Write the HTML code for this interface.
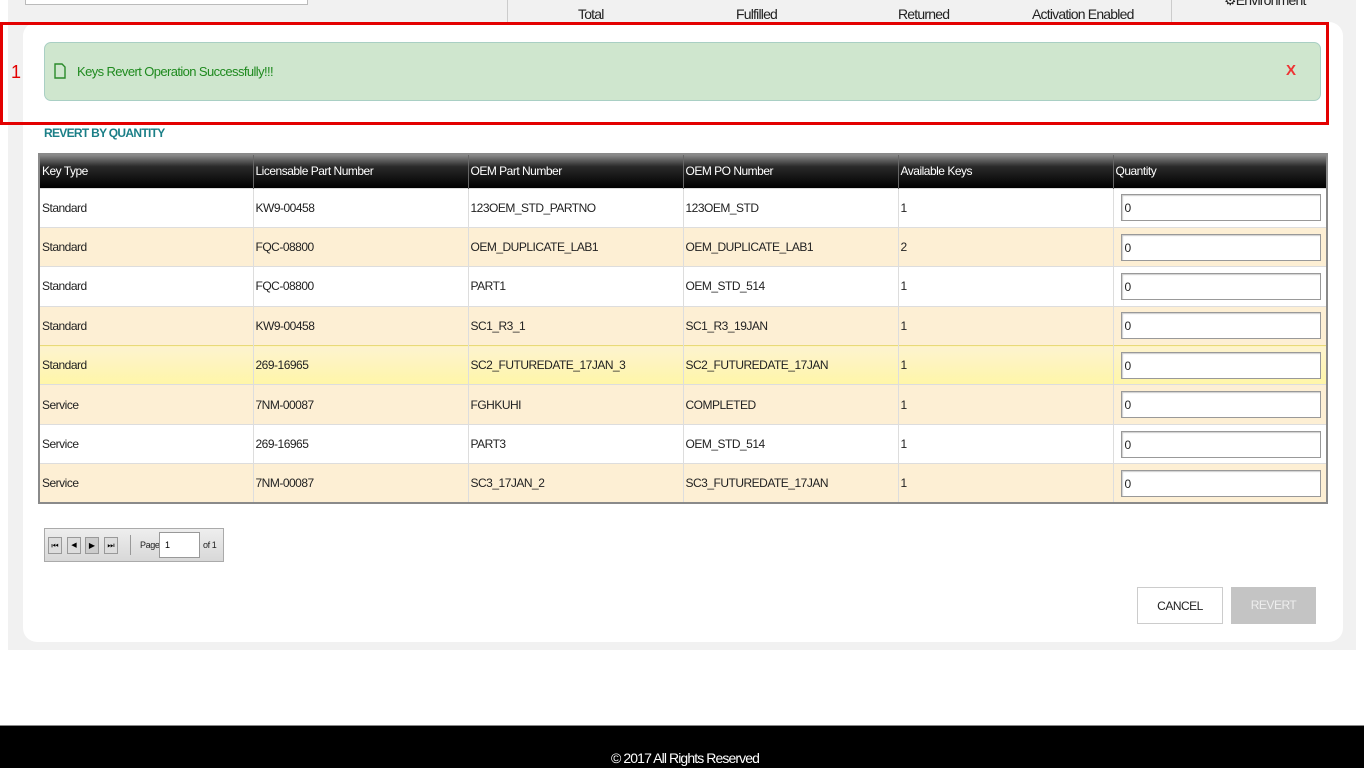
<!DOCTYPE html>
<html><head><meta charset="utf-8"><style>
*{margin:0;padding:0;box-sizing:border-box}
body{width:1364px;height:768px;position:relative;background:#fff;font-family:"Liberation Sans",sans-serif;overflow:hidden}
.a{position:absolute}
.t{font-size:12px;letter-spacing:-0.4px;color:#222;white-space:nowrap}
table{border-collapse:collapse;position:absolute;left:38px;top:153px;width:1290px;border:2px solid #8a8a8a;table-layout:fixed}
th{height:34px;background:linear-gradient(#8a8a8a,#2a2a2a 35%,#000);color:#fff;font-weight:normal;text-align:left;font-size:12px;letter-spacing:-0.5px;padding-left:2px;border-right:1px solid #666}
td{height:39.4px;font-size:12px;letter-spacing:-0.5px;color:#222;padding-left:2px;border:1px solid #ddd;border-width:1px 1px 0 0}
td.q{padding-left:7px}
tr.w td{background:#fff}
tr.n td{background:#fdefd4}
tr.y td{background:linear-gradient(#fdf3cf,#fff6a8);border-top:1px solid #e8d97a}
.in{width:200px;height:27px;border:1px solid #999;background:#fff;box-shadow:inset 1px 1px 1px #ccc;font-size:12px;padding:6px 0 0 3px}
</style></head><body>
<div class="a" style="left:8px;top:0;width:1348px;height:650px;background:#f1f1f1"></div>
<div class="a" style="left:25px;top:0;width:283px;height:5px;background:#fff;border:1px solid #bbb;border-top:0"></div>
<div class="a" style="left:507px;top:0;width:1px;height:22px;background:#ccc"></div>
<div class="a" style="left:1171px;top:0;width:1px;height:22px;background:#ccc"></div>
<div class="a t" style="left:578px;top:6px;font-size:14px;letter-spacing:-0.8px">Total</div>
<div class="a t" style="left:736px;top:6px;font-size:14px;letter-spacing:-0.8px">Fulfilled</div>
<div class="a t" style="left:898px;top:6px;font-size:14px;letter-spacing:-0.8px">Returned</div>
<div class="a t" style="left:1032px;top:6px;font-size:14px;letter-spacing:-0.8px">Activation Enabled</div>
<div class="a t" style="left:1224px;top:-8px;font-size:14px;letter-spacing:-0.8px">⚙Environment</div>
<div class="a" style="left:23px;top:22px;width:1320px;height:620px;background:#fff;border-radius:14px"></div>
<div class="a" style="left:0;top:22px;width:1329px;height:103px;border:3px solid #e30000"></div>
<div class="a" style="left:11px;top:62px;color:#e30000;font-size:18px">1</div>
<div class="a" style="left:44px;top:42px;width:1277px;height:59px;background:#cfe6ce;border:1px solid #a9cfc4;border-radius:7px"></div>
<svg class="a" style="left:54px;top:63px" width="12" height="16" viewBox="0 0 12 16"><path d="M1 1h7l3 3v11H1z" fill="none" stroke="#2a8a2a" stroke-width="1.4"/></svg>
<div class="a t" style="left:77px;top:64px;color:#1f8a1f;font-size:13px;letter-spacing:-0.6px">Keys Revert Operation Successfully!!!</div>
<div class="a" style="left:1286px;top:62px;color:#e33;font-size:15px;font-weight:bold">X</div>
<div class="a t" style="left:44px;top:126px;color:#1b7f87;font-weight:bold;letter-spacing:-0.7px">REVERT BY QUANTITY</div>
<table>
<colgroup><col style="width:214px"><col style="width:215px"><col style="width:215px"><col style="width:215px"><col style="width:215px"><col></colgroup>
<tr><th>Key Type</th><th>Licensable Part Number</th><th>OEM Part Number</th><th>OEM PO Number</th><th>Available Keys</th><th>Quantity</th></tr>
<tr class="w"><td>Standard</td><td>KW9-00458</td><td>123OEM_STD_PARTNO</td><td>123OEM_STD</td><td>1</td><td class="q"><div class="in">0</div></td></tr>
<tr class="n"><td>Standard</td><td>FQC-08800</td><td>OEM_DUPLICATE_LAB1</td><td>OEM_DUPLICATE_LAB1</td><td>2</td><td class="q"><div class="in">0</div></td></tr>
<tr class="w"><td>Standard</td><td>FQC-08800</td><td>PART1</td><td>OEM_STD_514</td><td>1</td><td class="q"><div class="in">0</div></td></tr>
<tr class="n"><td>Standard</td><td>KW9-00458</td><td>SC1_R3_1</td><td>SC1_R3_19JAN</td><td>1</td><td class="q"><div class="in">0</div></td></tr>
<tr class="y"><td>Standard</td><td>269-16965</td><td>SC2_FUTUREDATE_17JAN_3</td><td>SC2_FUTUREDATE_17JAN</td><td>1</td><td class="q"><div class="in">0</div></td></tr>
<tr class="n"><td>Service</td><td>7NM-00087</td><td>FGHKUHI</td><td>COMPLETED</td><td>1</td><td class="q"><div class="in">0</div></td></tr>
<tr class="w"><td>Service</td><td>269-16965</td><td>PART3</td><td>OEM_STD_514</td><td>1</td><td class="q"><div class="in">0</div></td></tr>
<tr class="n"><td>Service</td><td>7NM-00087</td><td>SC3_17JAN_2</td><td>SC3_FUTUREDATE_17JAN</td><td>1</td><td class="q"><div class="in">0</div></td></tr>
</table>
<div class="a" style="left:44px;top:528px;width:180px;height:34px;background:linear-gradient(#eee,#d8d8d8);border:1px solid #aaa"></div>
<div class="a" style="left:48px;top:537px;width:14px;height:17px;border:1px solid #999;background:#ddd;font-size:8px;text-align:center;line-height:15px">⏮</div>
<div class="a" style="left:67px;top:537px;width:14px;height:17px;border:1px solid #999;background:#ddd;font-size:7px;text-align:center;line-height:15px">◀</div>
<div class="a" style="left:85px;top:537px;width:14px;height:17px;border:1px solid #999;background:#ccc;font-size:8px;text-align:center;line-height:15px">▶</div>
<div class="a" style="left:104px;top:537px;width:14px;height:17px;border:1px solid #999;background:#ddd;font-size:8px;text-align:center;line-height:15px">⏭</div>
<div class="a" style="left:130px;top:535px;width:1px;height:20px;background:#999"></div>
<div class="a t" style="left:140px;top:540px;font-size:9px">Page</div>
<div class="a" style="left:159px;top:532px;width:41px;height:26px;background:#fff;border:1px solid #999;font-size:9px;padding:7px 0 0 5px">1</div>
<div class="a t" style="left:203px;top:540px;font-size:9px">of 1</div>
<div class="a" style="left:1137px;top:587px;width:86px;height:37px;border:1px solid #ccc;background:#fff;font-size:12px;text-align:center;line-height:37px;color:#222;letter-spacing:-0.5px">CANCEL</div>
<div class="a" style="left:1231px;top:587px;width:85px;height:37px;background:#c4c4c4;font-size:12px;text-align:center;line-height:37px;color:#eee;letter-spacing:-0.5px">REVERT</div>
<div class="a" style="left:0;top:725px;width:1364px;height:43px;background:#000;border-top:1px solid #888"></div>
<div class="a t" style="left:611px;top:750px;color:#fff;font-size:14px;letter-spacing:-0.9px">© 2017 All Rights Reserved</div>
</body></html>
